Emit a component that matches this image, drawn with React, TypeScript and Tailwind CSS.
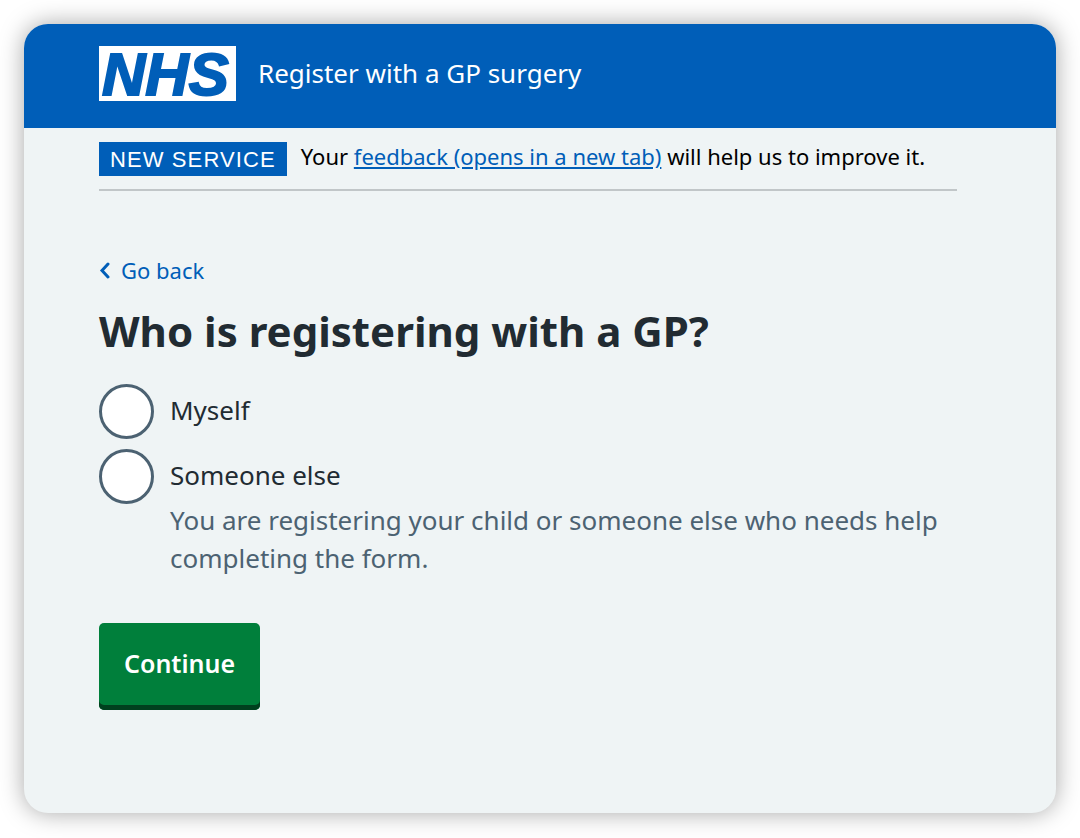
const options = [
  { id: "myself", label: "Myself", hint: "" },
  {
    id: "someone-else",
    label: "Someone else",
    hint: "You are registering your child or someone else who needs help completing the form.",
  },
];

function Logo() {
  return (
    <svg viewBox="0 0 137 55" className="h-[55px] w-[137px] shrink-0 overflow-visible" role="img" aria-label="NHS">
      <rect width="137" height="55" fill="#fff" />
      <text
        x="3"
        y="49"
        fill="#005eb8"
        stroke="#005eb8"
        strokeWidth="2"
        fontFamily="'Liberation Sans', sans-serif"
        fontSize="60"
        fontStyle="italic"
        fontWeight="700"
      >
        NHS
      </text>
    </svg>
  );
}

export default function App() {
  return (
    <div className="min-h-screen bg-white px-6 pt-6 pb-6 font-['Noto_Sans',sans-serif] text-[#212b32]">
      <div className="flex min-h-[789px] flex-col rounded-3xl bg-[#eff4f5] shadow-[0_0_24px_rgba(0,0,0,0.35)]">
        <header className="flex h-[104px] items-center rounded-t-3xl bg-[#005eb8] px-[75px] pb-[6px]">
          <a href="#home" className="flex items-center gap-[22px] text-[26px] text-white">
            <Logo />
            <span>Register with a GP surgery</span>
          </a>
        </header>

        <div className="pr-[99px] pl-[75px]">
          <div className="flex items-start gap-[14px] border-b-2 border-[#c1c6c8] pt-[14px] pb-[13px]">
            <strong className="flex h-[34px] shrink-0 items-center bg-[#005eb8] px-[11px] font-['Liberation_Sans',sans-serif] text-[22px] font-normal tracking-wider text-white">
              NEW SERVICE
            </strong>
            <p className="text-[22px] leading-[28px] text-black">
              Your{" "}
              <a href="#feedback" className="text-[#005eb8] underline">
                feedback (opens in a new tab)
              </a>{" "}
              will help us to improve it.
            </p>
          </div>

          <main className="pt-[64px]">
            <a href="#back" className="inline-flex items-center gap-[10px] text-[22px] leading-[30px] text-[#005eb8]">
              <svg viewBox="0 0 12 18" className="h-[18px] w-3" fill="none" stroke="currentColor" strokeWidth="3" strokeLinecap="round" aria-hidden="true">
                <path d="M9 3 3 9.500 9 16" />
              </svg>
              Go back
            </a>
            <form onSubmit={(event) => event.preventDefault()}>
              <fieldset>
                <legend className="pt-[17px] text-[42px] leading-[58px] font-bold">
                  <h1>Who is registering with a GP?</h1>
                </legend>
                <div className="flex flex-col gap-[10px] pt-6">
                  {options.map((option) => (
                    <div key={option.id} className="flex items-start gap-4">
                      <input
                        type="radio"
                        name="registering"
                        id={option.id}
                        aria-describedby={option.hint ? option.id + "-hint" : undefined}
                        className="size-[55px] shrink-0 appearance-none rounded-full border-3 border-[#4c6272] bg-white checked:shadow-[inset_0_0_0_12px_white] checked:bg-[#212b32]"
                      />
                      <div className="text-[26px]">
                        <label htmlFor={option.id} className="block leading-[52px]">
                          {option.label}
                        </label>
                        {option.hint && (
                          <p id={option.id + "-hint"} className="leading-[38px] text-[#4c6272]">
                            {option.hint}
                          </p>
                        )}
                      </div>
                    </div>
                  ))}
                </div>
              </fieldset>
              <button
                type="submit"
                className="mt-[46px] rounded-[5px] bg-[#007f3b] px-[25px] pt-[21px] pb-[28px] text-[25px] leading-[38px] font-semibold text-white shadow-[inset_0_-5px_0_#00401e]"
              >
                Continue
              </button>
            </form>
          </main>
        </div>
      </div>
    </div>
  );
}
